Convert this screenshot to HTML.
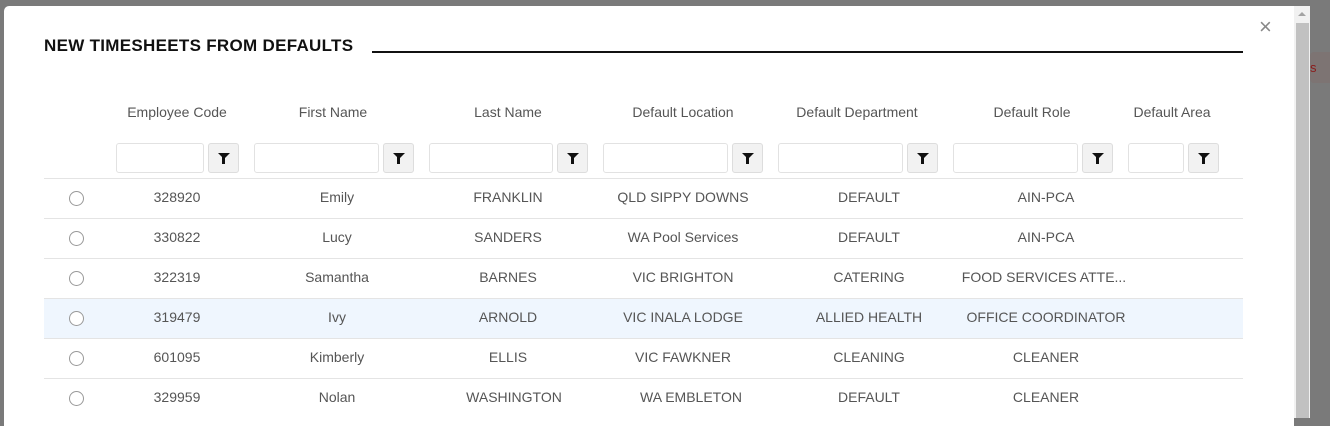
<!DOCTYPE html>
<html><head><style>
*{margin:0;padding:0;box-sizing:border-box}
body{width:1330px;height:418px;overflow:hidden;background:#7a7a7a;font-family:"Liberation Sans",sans-serif;position:relative}
.modal{position:absolute;left:4px;top:6px;width:1290px;height:420px;background:#fff;border-radius:5px 0 0 0}
.sb{position:absolute;left:1294px;top:6px;width:16px;height:412px;background:#f1f1f1}
.thumb{position:absolute;left:1296px;top:23px;width:13px;height:395px;background:#c1c1c1}
.t{position:absolute;white-space:nowrap;transform:translateX(-50%);font-size:14px;color:#555}
.h{color:#555;font-size:14px;top:104px}
.in{position:absolute;top:143px;height:30px;border:1px solid #e2e2e2;border-radius:3px;background:#fff}
.bt{position:absolute;top:143px;width:31px;height:30px;border:1px solid #ddd;border-radius:3px;background:#f2f2f2}
.bt:after{content:"";position:absolute;left:9px;top:9px;border-left:6px solid transparent;border-right:6px solid transparent;border-top:6px solid #111}
.bt:before{content:"";position:absolute;left:13px;top:13px;width:3px;height:7px;background:#111}
.ln{position:absolute;left:44px;width:1199px;height:1px;background:#e4e4e4}
.r{position:absolute;left:69px;width:15px;height:15px;border:1px solid #999;border-radius:50%;background:#fff}
</style></head><body>
<div class="modal"></div>
<div class="sb"></div><div class="thumb"></div>
<div style="position:absolute;left:1298px;top:12px;border-left:4px solid transparent;border-right:4px solid transparent;border-bottom:4px solid #a3a3a3"></div>
<div style="position:absolute;left:1310px;top:52px;width:20px;height:31px;background:#7d7473;border-radius:4px 0 0 4px"></div>
<div style="position:absolute;left:1310px;top:60px;font-size:13px;color:#8b1a1a">s</div>
<div style="position:absolute;left:44px;top:36px;font-size:17px;font-weight:bold;color:#111;letter-spacing:0.3px">NEW TIMESHEETS FROM DEFAULTS</div>
<div style="position:absolute;left:372px;top:51px;width:871px;height:2px;background:#111"></div>
<div style="position:absolute;left:1259px;top:16px;font-size:22px;color:#888;line-height:1">×</div>

<div class="t h" style="left:177px">Employee Code</div>
<div class="t h" style="left:333px">First Name</div>
<div class="t h" style="left:508px">Last Name</div>
<div class="t h" style="left:683px">Default Location</div>
<div class="t h" style="left:857px">Default Department</div>
<div class="t h" style="left:1032px">Default Role</div>
<div class="t h" style="left:1172px">Default Area</div>

<div class="in" style="left:116px;width:88px"></div><div class="bt" style="left:208px"></div>
<div class="in" style="left:254px;width:125px"></div><div class="bt" style="left:383px"></div>
<div class="in" style="left:429px;width:124px"></div><div class="bt" style="left:557px"></div>
<div class="in" style="left:603px;width:125px"></div><div class="bt" style="left:732px"></div>
<div class="in" style="left:778px;width:125px"></div><div class="bt" style="left:907px"></div>
<div class="in" style="left:953px;width:125px"></div><div class="bt" style="left:1082px"></div>
<div class="in" style="left:1128px;width:56px"></div><div class="bt" style="left:1188px"></div>

<div style="position:absolute;left:44px;top:299px;width:1199px;height:39px;background:#eff6fe"></div>
<div class="ln" style="top:178px"></div><div class="ln" style="top:218px"></div><div class="ln" style="top:258px"></div>
<div class="ln" style="top:298px"></div><div class="ln" style="top:338px"></div><div class="ln" style="top:378px"></div>

<div class="r" style="top:191px"></div><div class="r" style="top:231px"></div><div class="r" style="top:271px"></div>
<div class="r" style="top:311px"></div><div class="r" style="top:351px"></div><div class="r" style="top:391px"></div>

<div class="t" style="left:177px;top:189px">328920</div><div class="t" style="left:337px;top:189px">Emily</div><div class="t" style="left:508px;top:189px">FRANKLIN</div><div class="t" style="left:683px;top:189px">QLD SIPPY DOWNS</div><div class="t" style="left:869px;top:189px">DEFAULT</div><div class="t" style="left:1046px;top:189px">AIN-PCA</div>
<div class="t" style="left:177px;top:229px">330822</div><div class="t" style="left:337px;top:229px">Lucy</div><div class="t" style="left:508px;top:229px">SANDERS</div><div class="t" style="left:683px;top:229px">WA Pool Services</div><div class="t" style="left:869px;top:229px">DEFAULT</div><div class="t" style="left:1046px;top:229px">AIN-PCA</div>
<div class="t" style="left:177px;top:269px">322319</div><div class="t" style="left:337px;top:269px">Samantha</div><div class="t" style="left:508px;top:269px">BARNES</div><div class="t" style="left:683px;top:269px">VIC BRIGHTON</div><div class="t" style="left:869px;top:269px">CATERING</div><div class="t" style="left:1044px;top:269px">FOOD SERVICES ATTE...</div>
<div class="t" style="left:177px;top:309px">319479</div><div class="t" style="left:337px;top:309px">Ivy</div><div class="t" style="left:508px;top:309px">ARNOLD</div><div class="t" style="left:683px;top:309px">VIC INALA LODGE</div><div class="t" style="left:869px;top:309px">ALLIED HEALTH</div><div class="t" style="left:1046px;top:309px">OFFICE COORDINATOR</div>
<div class="t" style="left:177px;top:349px">601095</div><div class="t" style="left:337px;top:349px">Kimberly</div><div class="t" style="left:508px;top:349px">ELLIS</div><div class="t" style="left:683px;top:349px">VIC FAWKNER</div><div class="t" style="left:869px;top:349px">CLEANING</div><div class="t" style="left:1046px;top:349px">CLEANER</div>
<div class="t" style="left:177px;top:389px">329959</div><div class="t" style="left:337px;top:389px">Nolan</div><div class="t" style="left:514px;top:389px">WASHINGTON</div><div class="t" style="left:691px;top:389px">WA EMBLETON</div><div class="t" style="left:869px;top:389px">DEFAULT</div><div class="t" style="left:1046px;top:389px">CLEANER</div>
</body></html>
